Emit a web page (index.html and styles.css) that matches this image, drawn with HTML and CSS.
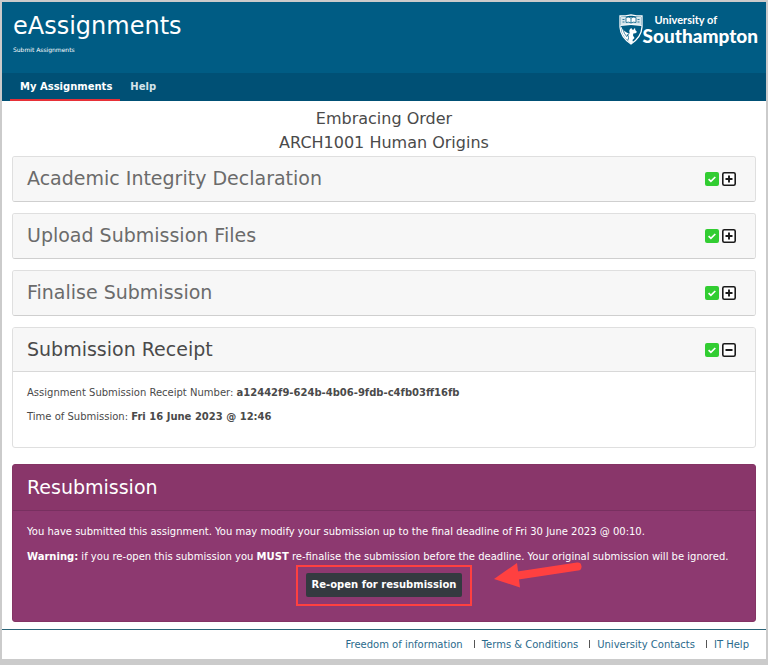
FILE: index.html
```html
<!DOCTYPE html>
<html lang="en">
<head>
    <meta charset="UTF-8">
    <meta name="viewport" content="width=device-width, initial-scale=1.0">
    <title>eAssignments</title>
    <link rel="stylesheet" href="styles.css">
</head>
<body>
    <svg class="sprite" aria-hidden="true">
        <symbol id="check" viewBox="0 0 14 14">
            <rect width="14" height="14" rx="2" fill="#32cd32"/>
            <path d="M3.6 7.2l2.3 2.2 4.4-4.4" fill="none" stroke="#fff" stroke-width="1.7"/>
        </symbol>
        <symbol id="plus" viewBox="0 0 14 14">
            <rect x="0.8" y="0.8" width="12.4" height="12.4" rx="1.5" fill="#fff" stroke="#1b1b1b" stroke-width="1.6"/>
            <path d="M3.5 7h7M7 3.5v7" stroke="#1b1b1b" stroke-width="1.9"/>
        </symbol>
        <symbol id="minus" viewBox="0 0 14 14">
            <rect x="0.8" y="0.8" width="12.4" height="12.4" rx="1.5" fill="#fff" stroke="#1b1b1b" stroke-width="1.6"/>
            <path d="M3.5 7h7" stroke="#1b1b1b" stroke-width="1.9"/>
        </symbol>
    </svg>

    <div class="page">
        <header class="header">
            <div>
                <h1 class="site-title">eAssignments</h1>
                <p class="site-subtitle">Submit Assignments</p>
            </div>
            <div class="logo">
                <svg class="shield" viewBox="0 0 24 31" aria-hidden="true">
                    <path d="M1 2Q6.500 2 12 0.800Q17.500 2 23 2V13Q22.500 23 12 30Q1.500 23 1 13Z" fill="#005c84" stroke="#fff" stroke-width="1.300"/>
                    <path d="M2 3h20v8H2z" fill="#fff" opacity="0.85"/>
                    <path d="M7 3.500q3-1 5 0.500q2-1.500 5-0.500v5q-3-1-5 0.500q-2-1.500-5-0.500z" fill="#fff" stroke="#005c84" stroke-width="0.800"/>
                    <path d="M12 4v5M3.500 5.500h2M3.500 8h2M18.500 5.500h2M18.500 8h2" stroke="#005c84" stroke-width="0.800"/>
                    <path d="M1.500 11.500Q12 9.500 22.500 11.500" fill="none" stroke="#fff" stroke-width="1"/>
                    <path d="M11 15l1.500-1 0.500 1.500 1.500 0.200 1.500-2 0.300 2.300 1.700 2-1.500 1.200-2.200 0.200-0.300 2 1.500 2.500-2 2 0.500 2-2 1.500-3-2.500 1-3.500-0.800-2.500 1.500-2-0.500-2z" fill="#fff"/>
                    <path d="M2 12.500Q5 18 10 19.500L7.500 21L9.500 23L8.500 26Q3 22 2 14z" fill="#fff"/>
                    <path d="M3.500 14Q5 20 8 23" fill="none" stroke="#005c84" stroke-width="0.700"/>
                </svg>
                <div class="logo-text">
                    <span class="logo-top">University of</span>
                    <span class="logo-name">Southampton</span>
                </div>
            </div>
        </header>

        <nav class="navbar">
            <a href="#" class="active">My Assignments</a>
            <a href="#">Help</a>
        </nav>

        <main class="content">
            <h2 class="assignment-title">Embracing Order</h2>
            <h2 class="assignment-title">ARCH1001 Human Origins</h2>

            <section class="card">
                <div class="card-header">
                    <h3>Academic Integrity Declaration</h3>
                    <svg class="icon" role="img" aria-label="Complete"><use href="#check"/></svg>
                    <button class="toggle" aria-label="Expand"><svg class="icon"><use href="#plus"/></svg></button>
                </div>
            </section>

            <section class="card">
                <div class="card-header">
                    <h3>Upload Submission Files</h3>
                    <svg class="icon" role="img" aria-label="Complete"><use href="#check"/></svg>
                    <button class="toggle" aria-label="Expand"><svg class="icon"><use href="#plus"/></svg></button>
                </div>
            </section>

            <section class="card">
                <div class="card-header">
                    <h3>Finalise Submission</h3>
                    <svg class="icon" role="img" aria-label="Complete"><use href="#check"/></svg>
                    <button class="toggle" aria-label="Expand"><svg class="icon"><use href="#plus"/></svg></button>
                </div>
            </section>

            <section class="card open">
                <div class="card-header">
                    <h3>Submission Receipt</h3>
                    <svg class="icon" role="img" aria-label="Complete"><use href="#check"/></svg>
                    <button class="toggle" aria-label="Collapse"><svg class="icon"><use href="#minus"/></svg></button>
                </div>
                <div class="card-body">
                    <p>Assignment Submission Receipt Number: <strong>a12442f9-624b-4b06-9fdb-c4fb03ff16fb</strong></p>
                    <p>Time of Submission: <strong>Fri 16 June 2023 @ 12:46</strong></p>
                </div>
            </section>

            <section class="card resubmission">
                <div class="card-header">
                    <h3>Resubmission</h3>
                </div>
                <div class="card-body">
                    <p>You have submitted this assignment. You may modify your submission up to the final deadline of Fri 30 June 2023 @ 00:10.</p>
                    <p><strong>Warning:</strong> if you re-open this submission you <strong>MUST</strong> re-finalise the submission before the deadline. Your original submission will be ignored.</p>
                    <div class="highlight">
                        <button class="btn">Re-open for resubmission</button>
                        <svg class="arrow" viewBox="0 0 90 28" aria-hidden="true">
                            <path d="M24 13.500L83.500 4.500" stroke="#ff4040" stroke-width="8" stroke-linecap="round"/>
                            <path d="M0 17L23 1L26 25.500Z" fill="#ff4040"/>
                        </svg>
                    </div>
                </div>
            </section>
        </main>

        <footer class="footer">
            <a href="#">Freedom of information</a>
            <a href="#">Terms &amp; Conditions</a>
            <a href="#">University Contacts</a>
            <a href="#">IT Help</a>
        </footer>
    </div>
</body>
</html>
```
FILE: styles.css
```css
* {
    box-sizing: border-box;
}

body {
    margin: 0;
    padding: 2px;
    background: #cbcbcb;
    color: #4a4a4a;
    font-family: Verdana, "DejaVu Sans", sans-serif;
    font-size: 10px;
    line-height: 16px;
}

h1, h2, h3, p {
    margin: 0;
    font-weight: 400;
}

a {
    text-decoration: none;
}

.sprite {
    display: none;
}

.page {
    background: #fff;
}

/* Header */
.header {
    display: flex;
    justify-content: space-between;
    height: 71px;
    padding: 8px 8px 0 11px;
    background: #005c84;
    color: #fff;
}

.site-title {
    font-size: 24px;
    line-height: 32px;
}

.site-subtitle {
    font-size: 6px;
}

.logo {
    display: flex;
    align-items: flex-start;
    padding-top: 4px;
}

.shield {
    width: 24px;
    height: 31px;
}

.logo-text {
    display: flex;
    flex-direction: column;
    font-family: Lato, sans-serif;
    font-weight: 900;
}

.logo-top {
    padding-left: 12px;
    font-size: 11px;
    font-weight: 700;
    line-height: 12px;
}

.logo-name {
    font-size: 19px;
    line-height: 20px;
}

/* Navigation */
.navbar {
    display: flex;
    padding: 0 8px;
    background: #005075;
}

.navbar a {
    padding: 6px 8px 4px 10px;
    border-bottom: 2px solid transparent;
    color: #d5e3ea;
    font-weight: 700;
}

.navbar a.active {
    border-color: #e73037;
    color: #fff;
}

/* Main content */
.content {
    padding: 6px 10px 7px;
}

.assignment-title {
    font-size: 16px;
    line-height: 24px;
    text-align: center;
}

.assignment-title + .card {
    margin-top: 1px;
}

.card {
    margin-bottom: 11px;
    border: 1px solid #dfdfdf;
    border-bottom-color: #cfcfcf;
    border-radius: 3px;
    overflow: hidden;
}

.card-header {
    display: flex;
    align-items: center;
    gap: 3px;
    height: 44px;
    padding: 0 19px 0 14px;
    background: #f7f7f7;
    color: #6b6b6b;
}

.card-header h3 {
    flex: 1;
    padding-bottom: 2px;
    font-size: 19px;
    line-height: 28px;
}

.icon {
    display: block;
    width: 14px;
    height: 14px;
}

.toggle {
    padding: 0;
    border: 0;
    background: none;
}

.card-body {
    padding: 13px 14px 14px;
}

.card-body p {
    margin-bottom: 8px;
}

.open {
    margin-bottom: 16px;
    border-bottom-color: #dfdfdf;
}

.open .card-header {
    border-bottom: 1px solid #d8d8d8;
    color: #4a4a4a;
}

.resubmission {
    margin-bottom: 0;
    border-color: #843464;
    background: #8d3970;
    color: #fff;
    overflow: visible;
}

.resubmission .card-header {
    height: 46px;
    border-bottom: 1px solid #783060;
    background: #89366a;
    color: #fff;
}

.resubmission .card-body {
    padding-bottom: 15px;
}

.resubmission p {
    margin-bottom: 9px;
}

.resubmission p:nth-child(2) {
    margin-bottom: 0;
}

.highlight {
    position: relative;
    width: fit-content;
    margin: 0 auto;
    padding: 6px 8px 7px;
    border: 2px solid #ff4040;
}

.btn {
    display: block;
    height: 24px;
    padding: 0 6px;
    border: 0;
    border-radius: 2px;
    background: #343a40;
    color: #fff;
    font: inherit;
    font-weight: 700;
}

.arrow {
    position: absolute;
    top: -5px;
    left: calc(100% + 24px);
    width: 90px;
    height: 28px;
}

/* Footer */
.footer {
    display: flex;
    flex-wrap: wrap;
    justify-content: flex-end;
    padding: 7px 17px 6px;
    border-top: 1px solid #2a6478;
}

.footer a {
    color: #2a6a8c;
}

.footer a + a::before {
    content: "";
    display: inline-block;
    height: 8px;
    margin: 0 7px 0 11px;
    border-left: 1px solid #555;
}
```
